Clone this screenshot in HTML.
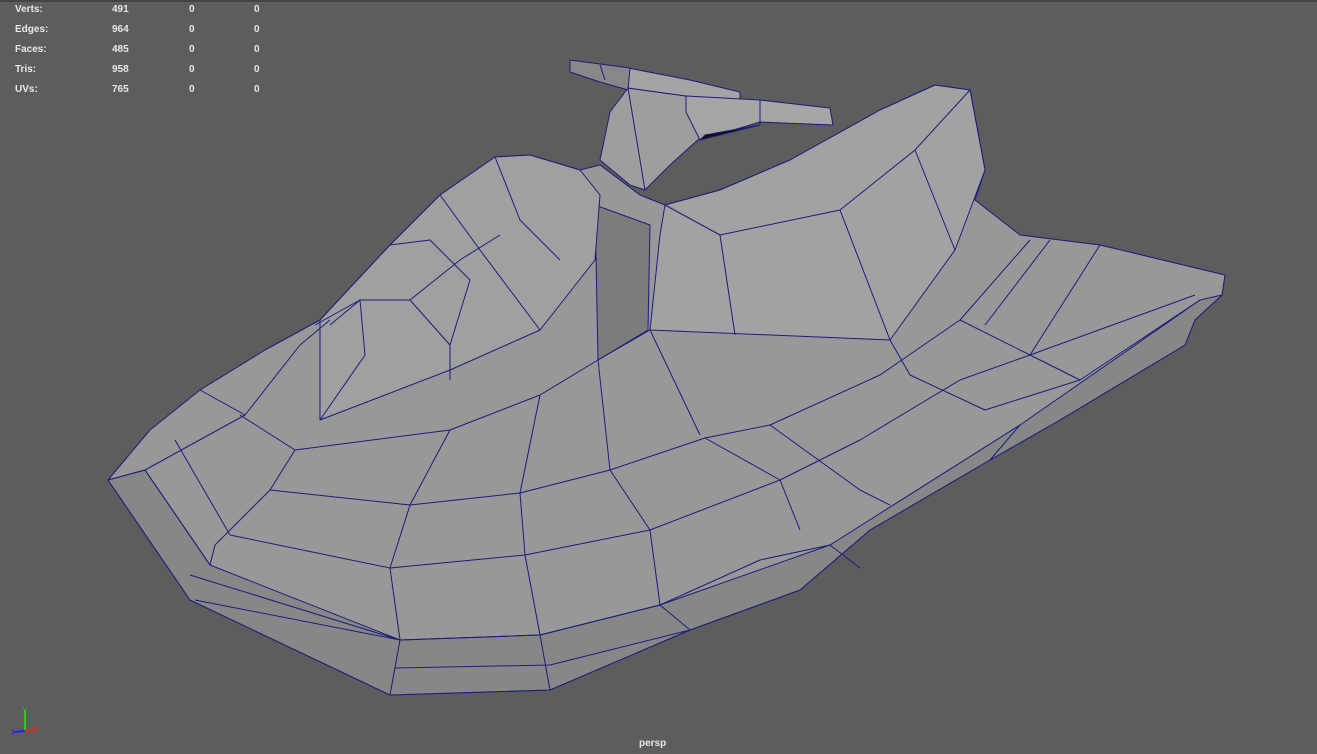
<!DOCTYPE html>
<html><head><style>
html,body{margin:0;padding:0;width:1317px;height:754px;overflow:hidden;background:#5d5d5d}
.st{position:absolute;font:bold 10px "Liberation Sans",sans-serif;color:#e8e8e8}
</style></head><body>
<div style="position:absolute;left:0;top:0;width:1317px;height:2px;background:#444"></div>
<div class="st" style="left:15px;top:0px;line-height:20px">Verts:<br>Edges:<br>Faces:<br>Tris:<br>UVs:</div>
<div class="st" style="left:112px;top:0px;line-height:20px">491<br>964<br>485<br>958<br>765</div>
<div class="st" style="left:189px;top:0px;line-height:20px">0<br>0<br>0<br>0<br>0</div>
<div class="st" style="left:254px;top:0px;line-height:20px">0<br>0<br>0<br>0<br>0</div>
<div class="st" style="left:639px;top:738px">persp</div>
<svg width="1317" height="754" style="position:absolute;left:0;top:0">
<g stroke-width="2" fill="none">
<line x1="25" y1="731" x2="25" y2="710" stroke="#2c2"/>
<line x1="25" y1="731" x2="36" y2="729" stroke="#e22"/>
<line x1="25" y1="731" x2="14" y2="732" stroke="#22e"/>
</g>
<text x="23" y="712" fill="#2c2" font-size="8" font-family="Liberation Sans">y</text>
<text x="34" y="731" fill="#e22" font-size="8" font-family="Liberation Sans">x</text>
<text x="11" y="734" fill="#22e" font-size="8" font-family="Liberation Sans">z</text>
<g stroke="#1c1c7a" stroke-width="1" stroke-linejoin="round">
<polygon fill="#989898" points="108,480 150,430 200,390 265,350 320,320 390,245 440,195 495,157 530,155 580,170 600,165 640,195 665,205 720,190 790,160 880,110 935,85 970,90 985,170 975,200 1020,235 1100,245 1225,275 1222,295 1195,320 1185,345 1060,420 990,460 870,530 800,590 690,630 550,690 390,695 190,600"/>
<polygon fill="#878787" points="108,480 145,470 210,565 400,640 540,635 660,605 830,545 1020,425 1200,300 1222,295 1195,320 1185,345 1060,420 990,460 870,530 800,590 690,630 550,690 390,695 190,600"/>
<polyline fill="none" points="190,575 400,640 540,635 660,605 760,560 830,545"/>
<polyline fill="none" points="395,668 550,665 690,630"/>
<polyline fill="none" points="108,480 145,470 210,565"/>
<polyline fill="none" points="195,600 400,640 390,695"/>
<line x1="540" y1="635" x2="550" y2="690"/><line x1="660" y1="605" x2="690" y2="630"/>
<line x1="830" y1="545" x2="860" y2="568"/><line x1="990" y1="460" x2="1020" y2="425"/>
<polygon fill="#a2a2a2" points="665,205 720,190 790,160 880,110 935,85 970,90 985,170 955,250 890,340 650,330 660,235"/>
<polyline fill="none" points="665,205 720,235 840,210 915,150 970,90"/>
<polyline fill="none" points="720,235 735,335"/><polyline fill="none" points="840,210 890,340"/>
<polyline fill="none" points="915,150 955,250"/>
<polygon fill="#7c7c7c" points="595,205 650,225 648,330 598,360"/>
<polygon fill="#a0a0a0" points="320,320 390,245 440,195 495,157 530,155 580,170 600,195 595,260 540,330 450,370 320,420"/>
<polyline fill="none" points="330,325 360,300 410,300 450,345 450,380"/>
<polyline fill="none" points="320,420 365,355 360,300 315,325"/>
<polyline fill="none" points="440,195 480,250 540,330"/>
<polyline fill="none" points="390,245 430,240 470,280 450,345"/>
<polyline fill="none" points="495,157 520,220 560,260"/>
<polyline fill="none" points="410,300 460,260 500,235"/>
<polyline fill="none" points="270,490 410,505 520,493 610,470 705,438 770,425 880,375 960,320 1030,240"/>
<polyline fill="none" points="145,470 245,415 300,345 330,320"/>
<polyline fill="none" points="240,415 295,450 450,430 540,395 598,360 650,330 700,435"/>
<polyline fill="none" points="295,450 270,490 215,545 210,565"/>
<polyline fill="none" points="410,505 390,568 400,640"/>
<polyline fill="none" points="520,493 525,555 540,635"/>
<polyline fill="none" points="610,470 650,530 660,605"/>
<polyline fill="none" points="450,430 410,505"/><polyline fill="none" points="540,395 520,493"/>
<polyline fill="none" points="598,360 610,470"/>
<polyline fill="none" points="230,535 390,568 525,555 650,530 780,480 860,440 960,380 1030,355 1195,295"/>
<polyline fill="none" points="705,438 780,480 800,530"/>
<polyline fill="none" points="770,425 860,490 890,505"/>
<polyline fill="none" points="890,340 910,375 985,410 1080,380 1200,300"/>
<polyline fill="none" points="960,320 1030,355 1080,380"/>
<polyline fill="none" points="1100,245 1030,355"/><polyline fill="none" points="1050,240 985,325"/>
<polyline fill="none" points="175,440 230,535"/><polyline fill="none" points="200,390 245,415"/>
<polygon fill="#9e9e9e" points="600,160 610,112 628,88 686,96 710,112 700,138 670,165 645,190 630,185"/>
<polygon fill="#a4a4a4" points="628,68 690,80 740,92 740,100 686,96 628,88"/>
<polygon fill="#888" points="570,60 630,68 628,90 600,82 570,72"/>
<polygon fill="#a6a6a6" points="686,96 760,100 830,108 833,125 760,122 700,140 686,112"/>
<polygon fill="#111" points="700,140 760,125 705,135"/>
<line x1="760" y1="100" x2="760" y2="124"/><line x1="600" y1="65" x2="605" y2="80"/>
<line x1="628" y1="88" x2="645" y2="190"/>
</g>
</svg>
</body></html>
